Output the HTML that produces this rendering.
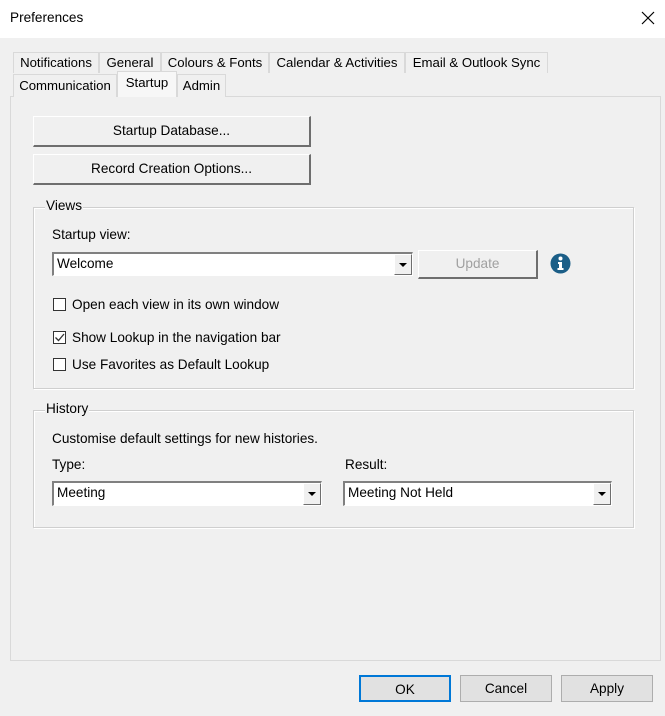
<!DOCTYPE html>
<html><head><style>
body{margin:0;width:665px;height:716px;background:#f0f0f0;font-family:"Liberation Sans",sans-serif;font-size:13.6px;color:#000;position:relative;overflow:hidden}
.a{position:absolute}
.title{left:0;top:0;width:665px;height:38px;background:#fff}
.tab{position:absolute;height:21px;border:1px solid #d9d9d9;border-bottom:none;background:#f0f0f0;text-align:center;line-height:20px;box-sizing:border-box;font-size:13.2px;white-space:nowrap}
.btn{position:absolute;box-sizing:border-box;background:#e1e1e1;border:1px solid #adadad;text-align:center}
.btn3{border-top:1px solid #fff;border-left:1px solid #fff;border-right:2px solid #6e6e6e;border-bottom:2px solid #6e6e6e;background:#f0f0f0}
.grp{position:absolute;border:1px solid #cfcfcf;box-sizing:border-box;box-shadow:inset 1px 1px 0 #fff,1px 1px 0 #fff}
.lg{position:absolute;background:#f0f0f0;padding:0 1px;top:-10px;left:11px}
.combo{position:absolute;box-sizing:border-box;background:#fff;border-top:2px solid #808080;border-left:2px solid #808080;border-bottom:1px solid #fff;border-right:1px solid #fff;line-height:20px;padding-left:3px}
.dd{position:absolute;right:0;top:0;width:18px;height:100%;background:#f0f0f0;border-left:1px solid #fff;border-top:1px solid #fff;border-bottom:1px solid #6e6e6e;border-right:1px solid #6e6e6e;box-sizing:border-box}
.dd:after{content:"";position:absolute;left:4px;top:8px;border-left:4px solid transparent;border-right:4px solid transparent;border-top:4px solid #000}
.cb{position:absolute;width:13px;height:13px;border:1px solid #333;background:#fff;box-sizing:border-box}
</style></head><body>
<div class="a title"></div>
<div class="a" style="left:10px;top:10px">Preferences</div>
<svg class="a" style="left:641px;top:11px" width="14" height="14"><path d="M1 1L13 13M13 1L1 13" stroke="#000" stroke-width="1.2"/></svg>

<div class="a" style="left:10px;top:96px;width:651px;height:565px;border:1px solid #d9d9d9;box-sizing:border-box;background:#f0f0f0"></div>

<div class="tab" style="left:13px;top:52px;width:86px">Notifications</div>
<div class="tab" style="left:99px;top:52px;width:62px">General</div>
<div class="tab" style="left:161px;top:52px;width:108px">Colours &amp; Fonts</div>
<div class="tab" style="left:269px;top:52px;width:136px">Calendar &amp; Activities</div>
<div class="tab" style="left:405px;top:52px;width:143px">Email &amp; Outlook Sync</div>
<div class="tab" style="left:13px;top:74px;width:104px;height:23px;line-height:22px">Communication</div>
<div class="tab" style="left:177px;top:74px;width:49px;height:23px;line-height:22px">Admin</div>
<div class="tab" style="left:117px;top:71px;width:60px;height:26px;background:#f7f7f7;line-height:22px">Startup</div>

<div class="btn btn3" style="left:33px;top:116px;width:278px;height:31px;line-height:28px">Startup Database...</div>
<div class="btn btn3" style="left:33px;top:154px;width:278px;height:31px;line-height:28px">Record Creation Options...</div>

<div class="grp" style="left:33px;top:207px;width:601px;height:182px"><span class="lg">Views</span></div>
<div class="a" style="left:52px;top:227px">Startup view:</div>
<div class="combo" style="left:52px;top:252px;width:361px;height:24px">Welcome<div class="dd"></div></div>
<div class="btn btn3" style="left:418px;top:250px;width:120px;height:29px;line-height:26px;color:#a0a0a0">Update</div>
<svg class="a" style="left:550px;top:253px" width="21" height="21"><circle cx="10.5" cy="10.5" r="10" fill="#1b5e87"/><circle cx="10.5" cy="5.5" r="2" fill="#fff"/><path d="M8 9h4v6h1.5v2h-6v-2H9v-4H8z" fill="#fff"/></svg>

<div class="cb" style="left:53px;top:298px"></div><div class="a" style="left:72px;top:297px">Open each view in its own window</div>
<div class="cb" style="left:53px;top:331px"></div><svg class="a" style="left:54px;top:332px" width="11" height="11"><path d="M1.5 5.5L4.5 8.5L10 2" stroke="#333" stroke-width="1.3" fill="none"/></svg><div class="a" style="left:72px;top:330px">Show Lookup in the navigation bar</div>
<div class="cb" style="left:53px;top:358px"></div><div class="a" style="left:72px;top:357px">Use Favorites as Default Lookup</div>

<div class="grp" style="left:33px;top:410px;width:601px;height:118px"><span class="lg">History</span></div>
<div class="a" style="left:52px;top:431px">Customise default settings for new histories.</div>
<div class="a" style="left:52px;top:457px">Type:</div>
<div class="a" style="left:345px;top:457px">Result:</div>
<div class="combo" style="left:52px;top:481px;width:270px;height:25px">Meeting<div class="dd"></div></div>
<div class="combo" style="left:343px;top:481px;width:269px;height:25px">Meeting Not Held<div class="dd"></div></div>

<div class="btn" style="left:359px;top:675px;width:92px;height:27px;line-height:25px;border:2px solid #0078d7">OK</div>
<div class="btn" style="left:460px;top:675px;width:92px;height:27px;line-height:25px">Cancel</div>
<div class="btn" style="left:561px;top:675px;width:92px;height:27px;line-height:25px">Apply</div>
</body></html>
